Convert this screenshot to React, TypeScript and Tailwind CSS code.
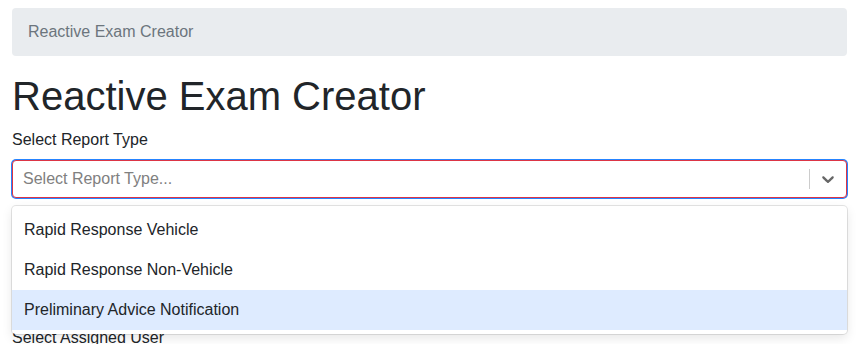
import React from "react";

const options = [
  "Rapid Response Vehicle",
  "Rapid Response Non-Vehicle",
  "Preliminary Advice Notification",
];

export default function App() {
  return (
    <div className="min-h-screen bg-white pl-3 pr-[10px] pt-2 text-[#212529] font-['Liberation_Sans',Arial,sans-serif]">
      <nav className="mb-4 h-12 rounded bg-[#e9ecef] px-4 py-3 text-base leading-6 text-[#6c757d]">
        Reactive Exam Creator
      </nav>

      <h1 className="mb-2 text-[40px] leading-[48px] font-medium">Reactive Exam Creator</h1>

      <label className="mb-2 block text-base leading-6">Select Report Type</label>

      <div className="relative">
        <div className="flex h-[38px] items-center rounded border border-[#dc3545] bg-white shadow-[0_0_0_1px_#2684ff]">
          <div className="flex-1 px-2.5 text-base text-[#808080]">Select Report Type...</div>
          <span className="my-2 w-px self-stretch bg-[#cccccc]" />
          <div className="flex items-center p-2 text-[#666666]">
            <svg width="20" height="20" viewBox="0 0 20 20" fill="currentColor">
              <path d="M4.516 7.548c0.436-0.446 1.043-0.481 1.576 0l3.908 3.747 3.908-3.747c0.533-0.481 1.141-0.446 1.574 0 0.436 0.445 0.408 1.197 0 1.615-0.406 0.418-4.695 4.502-4.695 4.502-0.217 0.223-0.502 0.335-0.787 0.335s-0.57-0.112-0.789-0.335c0 0-4.287-4.084-4.695-4.502s-0.436-1.17 0-1.615z" />
            </svg>
          </div>
        </div>

        <div className="absolute left-0 right-0 top-full z-10 mt-2 rounded bg-white py-1 shadow-[0_0_0_1px_rgba(0,0,0,0.1),0_4px_11px_rgba(0,0,0,0.1)]">
          {options.map((o, i) => (
            <div
              key={o}
              className={`px-3 py-2 text-base leading-6 ${i === 2 ? "bg-[#deebff]" : ""}`}
            >
              {o}
            </div>
          ))}
        </div>
      </div>

      <label className="mt-[128px] block text-base leading-6">Select Assigned User</label>
    </div>
  );
}
